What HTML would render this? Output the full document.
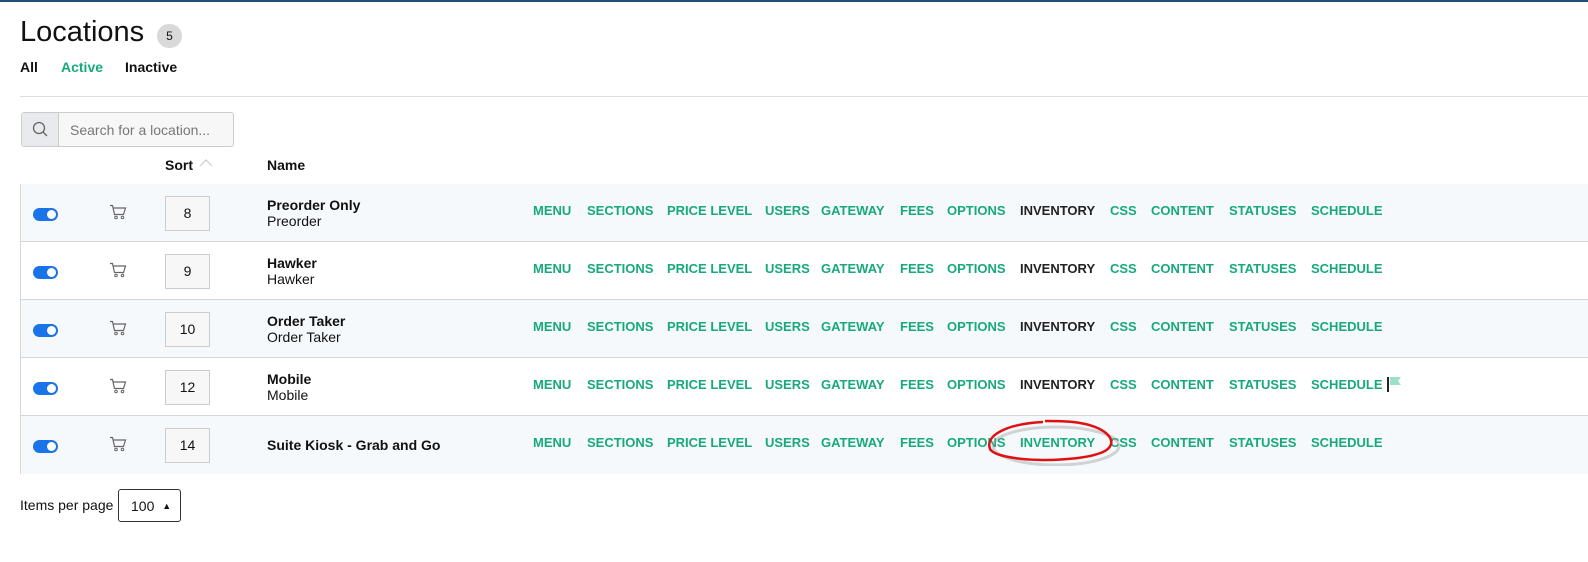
<!DOCTYPE html>
<html><head><meta charset="utf-8"><style>
*{box-sizing:border-box;margin:0;padding:0}
body{width:1588px;height:562px;background:#fff;font-family:"Liberation Sans",Arial,sans-serif;color:#111;position:relative;overflow:hidden;border-top:2px solid #1f4e79}
.a{position:absolute;white-space:nowrap}
h1{position:absolute;left:20px;top:14px;font-size:29px;font-weight:400;color:#111}
.badge{position:absolute;left:157px;top:22px;width:25px;height:24px;border-radius:12px;background:#d9d9d9;font-size:12px;text-align:center;line-height:24px}
.tab{position:absolute;top:57px;font-size:14px;font-weight:bold}
.hr{position:absolute;left:20px;right:0;top:94px;border-top:1px solid #ddd}
.search{position:absolute;left:21px;top:110px;width:213px;height:35px;border:1px solid #ccc;border-radius:3px;background:#f7f7f7}
.search .ic{position:absolute;left:0;top:0;width:37px;height:33px;background:#e8eaed;border-right:1px solid #ccc}
.search span{position:absolute;left:48px;top:9px;font-size:14px;color:#777}
.th{position:absolute;top:155px;font-size:14px;font-weight:bold}
.table{position:absolute;left:20px;top:182px;width:1580px;height:290px;border:1px solid #d6d6d6}
.row{position:absolute;left:0;width:100%;height:58px;border-bottom:1px solid #d6d6d6}
.row.alt{background:#f6f9fc}
.tog{position:absolute;left:12px;top:24px;width:25px;height:13px;border-radius:7px;background:#1a73e8}
.tog:after{content:"";position:absolute;right:2px;top:2px;width:9px;height:9px;border-radius:50%;background:#fff}
.cart{position:absolute;left:88px;top:20px}
.sort{position:absolute;left:144px;top:12px;width:45px;height:35px;border:1px solid #ccc;background:#f7f7f7;font-size:14px;text-align:center;line-height:33px}
.nm{position:absolute;left:246px;top:13px;font-size:14px;line-height:16px}
.nm b{display:block}
.lk{position:absolute;top:19px;font-size:13px;font-weight:bold;color:#17a97c;white-space:nowrap}
.lk.k{color:#222}
</style></head><body>
<h1>Locations</h1><div class="badge">5</div>
<div class="tab" style="left:20px">All</div>
<div class="tab" style="left:61px;color:#17a97c">Active</div>
<div class="tab" style="left:125px">Inactive</div>
<div class="hr"></div>
<div class="search"><div class="ic"><svg width="37" height="33"><circle cx="17" cy="15" r="5.5" fill="none" stroke="#666" stroke-width="1.3"/><line x1="21" y1="19" x2="25" y2="23" stroke="#666" stroke-width="1.3"/></svg></div><span>Search for a location...</span></div>
<div class="th" style="left:165px">Sort</div>
<svg class="a" style="left:199px;top:157px" width="14" height="8"><path d="M1 7 L7 1 L13 7" fill="none" stroke="#ccc" stroke-width="1.2"/></svg>
<div class="th" style="left:267px">Name</div>
<div class="table" id="t"></div>
<script>
var rows=[["8","Preorder Only","Preorder"],["9","Hawker","Hawker"],["10","Order Taker","Order Taker"],["12","Mobile","Mobile"],["14","Suite Kiosk - Grab and Go",""]];
var links=[["MENU",533],["SECTIONS",587],["PRICE LEVEL",667],["USERS",765],["GATEWAY",821],["FEES",900],["OPTIONS",947],["INVENTORY",1020],["CSS",1110],["CONTENT",1151],["STATUSES",1229],["SCHEDULE",1311]];
var h="";
rows.forEach(function(r,i){
h+='<div class="row'+(i%2==0?' alt':'')+'" style="top:'+(i*58-1)+'px;'+(i==4?'border-bottom:none;':'')+'"><div class="tog"></div>';
h+='<svg class="cart" width="18" height="16" viewBox="0 0 18 16"><path d="M1 1.5h2.5l2 9h9l2-6.5H4.5" fill="none" stroke="#666" stroke-width="1.2"/><circle cx="7" cy="13.5" r="1.3" fill="none" stroke="#666"/><circle cx="13.5" cy="13.5" r="1.3" fill="none" stroke="#666"/></svg>';
h+='<div class="sort">'+r[0]+'</div>';
h+='<div class="nm" style="'+(r[2]?'':'top:21px')+'"><b>'+r[1]+'</b>'+r[2]+'</div>';
links.forEach(function(l){h+='<div class="lk'+(l[0]=="INVENTORY"&&i<4?' k':'')+'" style="left:'+(l[1]-21)+'px">'+l[0]+'</div>';});
if(i==3)h+='<div class="a" style="left:1366px;top:19px;width:2px;height:15px;background:#222"></div><svg class="a" style="left:1369px;top:19px" width="12" height="10"><path d="M0 0h11l-3 4 3 4H0z" fill="#9de0c8"/></svg>';
h+='</div>';});
document.getElementById('t').innerHTML=h;
</script>
<svg class="a" style="left:985px;top:414px" width="140" height="50"><ellipse cx="68" cy="27" rx="63" ry="19" fill="none" stroke="#999" stroke-width="3" opacity=".4" transform="translate(3,3)"/><path d="M58 6 C20 8 0 20 5 33 C12 46 90 48 118 36 C135 28 125 12 95 7 C85 5 70 5 60 5" fill="none" stroke="#e01010" stroke-width="2.5"/></svg>
<div class="a" style="left:20px;top:495px;font-size:14px">Items per page</div>
<div class="a" style="left:118px;top:487px;width:63px;height:33px;border:1px solid #333;border-radius:3px;font-size:14px;padding:8px 0 0 12px">100 <span style="font-size:9px;position:relative;top:-2px;left:4px">▲</span></div>
</body></html>
